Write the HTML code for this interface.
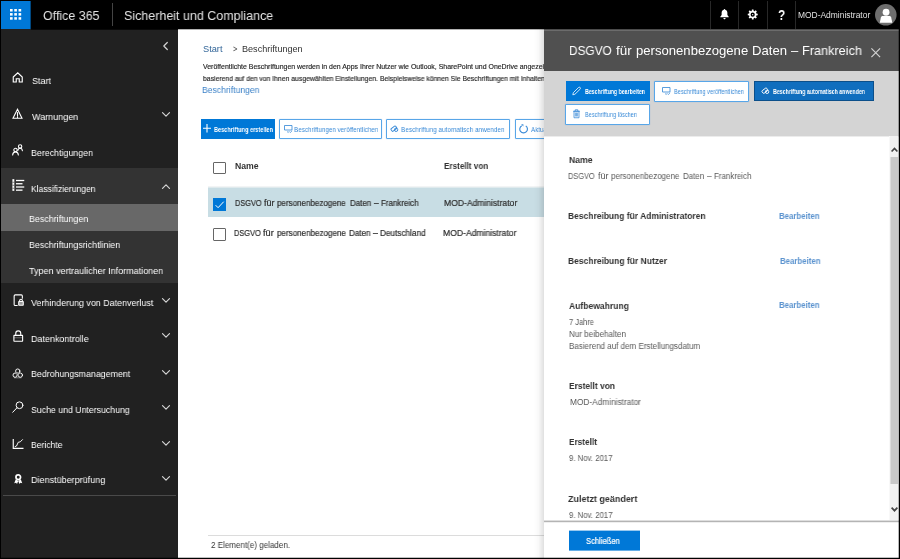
<!DOCTYPE html>
<html lang="de">
<head>
<meta charset="utf-8">
<title>Sicherheit und Compliance – Beschriftungen</title>
<style>
html,body{margin:0;padding:0;}
body{width:900px;height:559px;overflow:hidden;background:#fff;font-family:"Liberation Sans",sans-serif;}
#app{position:relative;width:900px;height:559px;overflow:hidden;background:#fff;}
.a{position:absolute;}
.t{position:absolute;white-space:nowrap;display:block;transform-origin:0 50%;will-change:transform;font-family:"Liberation Sans",sans-serif;}
svg{position:absolute;overflow:visible;}
.ic{fill:none;stroke:#fff;stroke-width:1;stroke-linecap:round;stroke-linejoin:round;}
.cb{position:absolute;width:11px;height:11px;border:1px solid #666;border-radius:1px;background:#fff;}
.btn{position:absolute;box-sizing:border-box;border:1px solid #58a6e8;border-radius:1px;background:#fff;box-shadow:0 0 1px rgba(60,140,216,.55);}
</style>
</head>
<body>
<div id="app">

<!-- ===== top bar ===== -->
<div class="a" id="topbar" style="left:0;top:0;width:900px;height:29px;background:#000;"></div>
<div class="a" style="left:31px;top:29px;width:147px;height:1px;background:rgba(0,0,0,.7);z-index:40;"></div>
<div class="a" style="left:178px;top:29px;width:722px;height:1px;background:rgba(0,0,0,.3);z-index:40;"></div>
<div class="a" id="waffle" style="left:0;top:0;width:30px;height:30px;background:#0078d7;"></div>
<div class="a" style="left:30px;top:0;width:1px;height:30px;background:rgba(0,120,215,.6);"></div>
<svg style="left:10px;top:9.100px" width="11.200" height="10.700" viewBox="0 0 11 11" preserveAspectRatio="none"><g fill="#fff">
<rect x="0" y="0" width="2.6" height="2.6"/><rect x="4.2" y="0" width="2.6" height="2.6"/><rect x="8.4" y="0" width="2.6" height="2.6"/>
<rect x="0" y="4.2" width="2.6" height="2.6"/><rect x="4.2" y="4.2" width="2.6" height="2.6"/><rect x="8.4" y="4.2" width="2.6" height="2.6"/>
<rect x="0" y="8.4" width="2.6" height="2.6"/><rect x="4.2" y="8.4" width="2.6" height="2.6"/><rect x="8.4" y="8.4" width="2.6" height="2.6"/></g></svg>
<div class="a" style="left:111.5px;top:3px;width:1px;height:23px;background:#444;"></div>
<div class="a" style="left:709.600px;top:0;width:1px;height:29px;background:#282828;"></div>
<div class="a" style="left:738px;top:0;width:1px;height:29px;background:#282828;"></div>
<div class="a" style="left:766.5px;top:0;width:1px;height:29px;background:#282828;"></div>
<div class="a" style="left:794.600px;top:0;width:1px;height:29px;background:#282828;"></div>
<!-- bell -->
<svg style="left:720px;top:9.3px" width="9" height="10.4" viewBox="0 0 18 21"><path fill="#fff" d="M9 0c.9 0 1.5.6 1.5 1.4 2.7.7 4.3 3 4.3 6v4.800l2.700 3.300v1H.5v-1l2.700-3.300V7.400c0-3 1.600-5.300 4.300-6C7.500.6 8.100 0 9 0zM6.800 18h4.400c0 1.400-.9 2.500-2.200 2.500S6.800 19.400 6.800 18z"/></svg>
<!-- gear -->
<svg style="left:747.200px;top:9px" width="11.400" height="11.400" viewBox="0 0 24 24"><path fill="#fff" fill-rule="evenodd" d="M10.300 1h3.400l.5 3 .1.030c.55.170 1.080.400 1.600.660l2.450-1.800 2.400 2.400-1.800 2.450c.27.500.5 1.050.66 1.600l3 .5v3.400l-3 .5c-.17.550-.4 1.080-.66 1.600l1.800 2.450-2.400 2.400-2.450-1.800c-.5.270-1.050.5-1.600.66l-.5 3h-3.400l-.5-3c-.55-.170-1.080-.4-1.600-.660l-2.450 1.800-2.400-2.400 1.800-2.450c-.27-.5-.5-1.050-.66-1.600l-3-.5v-3.400l3-.5c.17-.55.4-1.080.66-1.600l-1.800-2.450 2.400-2.400 2.450 1.800c.5-.27 1.050-.5 1.600-.66zM12 7.600a4.400 4.400 0 1 0 0 8.800 4.400 4.400 0 0 0 0-8.800zm0 3a1.400 1.400 0 1 1 0 2.800 1.400 1.400 0 0 1 0-2.800z"/></svg>
<!-- avatar -->
<svg style="left:875px;top:4px" width="21.6" height="21.6" viewBox="0 0 43 43"><defs><clipPath id="avc"><circle cx="21.500" cy="21.500" r="21.500"/></clipPath></defs><circle cx="21.500" cy="21.500" r="21.500" fill="#6e6e6e"/><g clip-path="url(#avc)" fill="#fff"><circle cx="22" cy="16.500" r="6.800"/><path d="M9.500 37.500l2.200-10.500c.5-2 1.800-3 3.800-3h13c2 0 3.300 1 3.800 3l2.200 10.500z"/></g></svg>

<!-- ===== sidebar ===== -->
<div class="a" id="sidebar" style="left:0;top:29px;width:178px;height:530px;background:#212121;"></div>
<div class="a" style="left:0;top:168px;width:178px;height:115px;background:#333;"></div>
<div class="a" style="left:0;top:204px;width:178px;height:26.5px;background:#686868;"></div>
<div class="a" style="left:3px;top:494.600px;width:172.500px;height:1px;background:#4a4a4a;"></div>
<!-- collapse arrow -->
<svg style="left:162.500px;top:42px" width="5" height="8" viewBox="0 0 5 8"><path class="ic" style="stroke:#d4d4d4;stroke-width:1.200" d="M4.300.5L.8 4l3.500 3.500"/></svg>
<!-- chevrons -->
<svg style="left:161.500px;top:112px" width="8" height="5" viewBox="0 0 8 5"><path class="ic" style="stroke:#d4d4d4;stroke-width:1.200" d="M.5.600L4 4.200 7.500.6"/></svg>
<svg style="left:161.500px;top:184.200px" width="8" height="5" viewBox="0 0 8 5"><path class="ic" style="stroke:#d4d4d4;stroke-width:1.200" d="M.5 4.400L4 .8l3.500 3.600"/></svg>
<svg style="left:161.500px;top:297.600px" width="8" height="5" viewBox="0 0 8 5"><path class="ic" style="stroke:#d4d4d4;stroke-width:1.200" d="M.5.600L4 4.200 7.500.6"/></svg>
<svg style="left:161.500px;top:333.400px" width="8" height="5" viewBox="0 0 8 5"><path class="ic" style="stroke:#d4d4d4;stroke-width:1.200" d="M.5.600L4 4.200 7.500.6"/></svg>
<svg style="left:161.500px;top:369.600px" width="8" height="5" viewBox="0 0 8 5"><path class="ic" style="stroke:#d4d4d4;stroke-width:1.200" d="M.5.600L4 4.200 7.500.6"/></svg>
<svg style="left:161.500px;top:404.600px" width="8" height="5" viewBox="0 0 8 5"><path class="ic" style="stroke:#d4d4d4;stroke-width:1.200" d="M.5.600L4 4.200 7.500.6"/></svg>
<svg style="left:161.500px;top:440.800px" width="8" height="5" viewBox="0 0 8 5"><path class="ic" style="stroke:#d4d4d4;stroke-width:1.200" d="M.5.600L4 4.200 7.500.6"/></svg>
<svg style="left:161.500px;top:476px" width="8" height="5" viewBox="0 0 8 5"><path class="ic" style="stroke:#d4d4d4;stroke-width:1.200" d="M.5.600L4 4.200 7.500.6"/></svg>

<!-- home -->
<svg style="left:12px;top:72.300px" width="11.500" height="10.700" viewBox="0 0 23 21.400"><path class="ic" style="stroke-width:2.300;stroke-linejoin:miter" d="M2.500 10L11.500 1.800 20.500 10V20H14.500V13.500H8.500V20H2.500Z"/></svg>
<!-- warning -->
<svg style="left:12px;top:108px" width="11" height="11" viewBox="0 0 22 22"><path class="ic" style="stroke-width:2.200;stroke-linejoin:miter" d="M11 2.500L2 20.500h18zM11 9v6.500M11 17.500v.8"/></svg>
<!-- permissions -->
<svg style="left:12px;top:144px" width="11.500" height="11.500" viewBox="0 0 23 23"><g class="ic" style="stroke-width:2.200"><circle cx="16.200" cy="4.800" r="3.400"/><path d="M11.800 13c.3-2.800 2-4.500 4.400-4.500 2.600 0 4.300 2 4.600 5"/><circle cx="7" cy="12" r="3.400"/><path d="M1.300 22c.3-3.800 2.600-6.200 5.700-6.200s5.400 2.400 5.700 6.200"/></g></svg>
<!-- classification list -->
<svg style="left:11.500px;top:179px" width="12.500" height="12" viewBox="0 0 25 24"><g fill="#fff"><rect x="0.800" y="0.300" width="3.800" height="23.400"/><rect x="8" y="1.700" width="16.500" height="2.600"/><rect x="8" y="8.200" width="13" height="2.600"/><rect x="8" y="14.700" width="16.500" height="2.600"/><rect x="8" y="21" width="13" height="2.600"/></g><g fill="#333"><rect x="0.800" y="5.700" width="3.800" height="1.300"/><rect x="0.800" y="11.700" width="3.800" height="1.300"/><rect x="0.800" y="17.700" width="3.800" height="1.300"/></g></svg>
<!-- DLP: page with lock -->
<svg style="left:12.500px;top:293.600px" width="11" height="12.400" viewBox="0 0 22 24.800"><g class="ic" style="stroke-width:2.200"><path d="M8.500 23H4.500c-1.300 0-2.200-.9-2.200-2.200V4c0-1.300.9-2.200 2.200-2.200h12c1.300 0 2.200.9 2.200 2.200v4.500"/><rect x="11.500" y="15" width="9" height="7.500" rx="0.500" style="fill:#fff;fill-opacity:.55"/><path d="M13.300 15v-1.800c0-1.800 1.100-2.800 2.700-2.800s2.700 1 2.700 2.800V15"/></g></svg>
<!-- lock -->
<svg style="left:12.500px;top:329.500px" width="10.500" height="12" viewBox="0 0 21 24"><g class="ic" style="stroke-width:2.200"><rect x="1.800" y="10.800" width="17.400" height="11.600" rx="0.500"/><path d="M5.500 10.500V7c0-3.200 2-5.300 5-5.300s5 2.100 5 5.300v3.500"/><path d="M2 15.500h17" style="stroke-width:1.400;stroke-opacity:.45"/></g></svg>
<!-- biohazard -->
<svg style="left:12px;top:368px" width="11.500" height="10.500" viewBox="0 0 23 21"><g class="ic" style="stroke-width:1.900"><circle cx="11.500" cy="6.200" r="4.300"/><circle cx="6.300" cy="14.300" r="4.300"/><circle cx="16.700" cy="14.300" r="4.300"/></g><circle cx="11.500" cy="11.600" r="3.300" fill="#212121"/><circle cx="11.500" cy="11.600" r="1.900" fill="none" stroke="#fff" stroke-width="1.500"/><path d="M4 19.600h15" stroke="#fff" stroke-width="1.200" stroke-opacity=".7" fill="none"/></svg>
<!-- search -->
<svg style="left:12px;top:400.500px" width="12" height="12" viewBox="0 0 24 24"><g class="ic" style="stroke-width:2"><circle cx="15" cy="8.500" r="6.800"/><path d="M10 13.500L1.500 22.500"/></g></svg>
<!-- reports -->
<svg style="left:12px;top:438.500px" width="11.500" height="10.500" viewBox="0 0 23 21"><g class="ic" style="stroke-width:2.300;stroke-linecap:butt;stroke-linejoin:miter"><path d="M2.500 0v18.800H23"/><path d="M5.500 15.500l3.500-1.500 3.500-7.500 4-.8 5-5" style="stroke-width:1.900"/></g></svg>
<!-- ribbon -->
<svg style="left:13.500px;top:474px" width="8.500" height="10" viewBox="0 0 17 20"><circle cx="8.500" cy="6.500" r="4.600" fill="none" stroke="#fff" stroke-width="3.400"/><path fill="#fff" d="M3.500 10.500L.5 18.500l3.700-.8 1.800 2.300 2.500-6zM13.500 10.500l3 8-3.700-.8-1.800 2.300-2.500-6z"/></svg>

<!-- ===== main ===== -->
<div class="a" id="main" style="left:178px;top:29px;width:367px;height:530px;background:#fff;"></div>
<!-- toolbar -->
<div class="a" style="left:201px;top:119px;width:74px;height:20px;background:#0078d7;"></div>
<svg style="left:203.300px;top:124.300px" width="8" height="8.400" viewBox="0 0 16 16.800"><path d="M8 0v16.800M0 8.400h16" stroke="#fff" stroke-width="2.200" fill="none"/></svg>
<div class="btn" style="left:279px;top:119px;width:102.500px;height:20.300px;"></div>
<svg style="left:283.700px;top:124.500px" width="8.500" height="7.500" viewBox="0 0 17 15"><g fill="none" stroke="#3c8cd8" stroke-width="1.700" stroke-linejoin="round"><path d="M1 1h15v9H1z"/><path d="M6 13l2.200 1.800 2.300-2M11 13.500l2 1.500 3-3.500" stroke-width="1.500"/></g></svg>
<div class="btn" style="left:386px;top:119px;width:124px;height:20.300px;"></div>
<svg style="left:390px;top:124.800px" width="8.800" height="7.400" viewBox="0 0 17.600 14.800"><g fill="none" stroke="#3c8cd8" stroke-width="2"><rect x="2" y="4.200" width="11.500" height="6.400" rx="1.600" transform="rotate(-37 7.700 7.400)"/><circle cx="12.200" cy="9.600" r="3.400"/></g></svg>
<div class="btn" style="left:515px;top:119px;width:60px;height:20.300px;"></div>
<svg style="left:519.200px;top:124px" width="9.200" height="9.200" viewBox="0 0 18.400 18.400"><g fill="none" stroke="#3c8cd8" stroke-width="2.300"><path d="M5.600 3.400A7.700 7.700 0 1 0 13.500 3.800"/></g><path d="M4.200.4h4.600v4.600z" fill="#3c8cd8"/></svg>

<!-- table -->
<div class="cb" style="left:213px;top:161.500px;height:10.500px;"></div>
<div class="a" style="left:208px;top:186px;width:336px;height:1px;background:#f2f4f5;"></div>
<div class="a" style="left:208px;top:187px;width:336px;height:1px;background:#dfeaed;"></div>
<div class="a" style="left:208px;top:188px;width:336px;height:29px;background:#c8dde4;"></div>
<div class="a" style="left:213px;top:198px;width:13.200px;height:13px;background:#0078d7;"></div>
<svg style="left:213px;top:198px" width="13.200" height="13" viewBox="0 0 13.200 13"><path d="M2.600 7.200l2.500 2.500 5.600-6" fill="none" stroke="#fff" stroke-width="1"/></svg>
<div class="cb" style="left:213px;top:228px;height:10.500px;"></div>
<div class="a" style="left:208px;top:535px;width:336px;height:1px;background:#dcdcdc;"></div>

<span class="t" style="left:42.50px;top:6.00px;line-height:19px;font-size:13.4px;font-weight:400;color:#e4e4e4;transform:scaleX(0.9293)">Office 365</span>
<span class="t" style="left:123.50px;top:6.00px;line-height:19px;font-size:13.4px;font-weight:400;color:#e4e4e4;transform:scaleX(0.9322)">Sicherheit und Compliance</span>
<span class="t" style="left:798.20px;top:8.00px;line-height:14px;font-size:8.4px;font-weight:400;color:#e0e0e0;transform:scaleX(1.0074)">MOD-Administrator</span>
<span class="t" style="left:777.80px;top:5.00px;line-height:20px;font-size:14.4px;font-weight:700;color:#fff;transform:scaleX(0.8185)">?</span>
<span class="t" style="left:31.75px;top:73.00px;line-height:15px;font-size:9.8px;font-weight:400;color:#fff;transform:scaleX(0.9177)">Start</span>
<span class="t" style="left:31.75px;top:109.00px;line-height:15px;font-size:9.8px;font-weight:400;color:#fff;transform:scaleX(0.9195)">Warnungen</span>
<span class="t" style="left:31.25px;top:145.00px;line-height:15px;font-size:9.8px;font-weight:400;color:#fff;transform:scaleX(0.9033)">Berechtigungen</span>
<span class="t" style="left:31.25px;top:181.00px;line-height:15px;font-size:9.8px;font-weight:400;color:#fff;transform:scaleX(0.8709)">Klassifizierungen</span>
<span class="t" style="left:28.50px;top:211.00px;line-height:15px;font-size:9.8px;font-weight:400;color:#fff;transform:scaleX(0.9065)">Beschriftungen</span>
<span class="t" style="left:28.50px;top:237.00px;line-height:15px;font-size:9.8px;font-weight:400;color:#fff;transform:scaleX(0.9057)">Beschriftungsrichtlinien</span>
<span class="t" style="left:28.50px;top:263.00px;line-height:15px;font-size:9.8px;font-weight:400;color:#fff;transform:scaleX(0.9198)">Typen vertraulicher Informationen</span>
<span class="t" style="left:31.25px;top:295.00px;line-height:15px;font-size:9.8px;font-weight:400;color:#fff;transform:scaleX(0.9087)">Verhinderung von Datenverlust</span>
<span class="t" style="left:31.00px;top:331.00px;line-height:15px;font-size:9.8px;font-weight:400;color:#fff;transform:scaleX(0.9139)">Datenkontrolle</span>
<span class="t" style="left:31.25px;top:366.00px;line-height:15px;font-size:9.8px;font-weight:400;color:#fff;transform:scaleX(0.9020)">Bedrohungsmanagement</span>
<span class="t" style="left:31.00px;top:402.00px;line-height:15px;font-size:9.8px;font-weight:400;color:#fff;transform:scaleX(0.8930)">Suche und Untersuchung</span>
<span class="t" style="left:31.25px;top:437.00px;line-height:15px;font-size:9.8px;font-weight:400;color:#fff;transform:scaleX(0.8761)">Berichte</span>
<span class="t" style="left:30.75px;top:472.00px;line-height:15px;font-size:9.8px;font-weight:400;color:#fff;transform:scaleX(0.9211)">Dienstüberprüfung</span>
<span class="t" style="left:202.50px;top:42.00px;line-height:14px;font-size:9.1px;font-weight:400;color:#336699;transform:scaleX(1.0146)">Start</span>
<span class="t" style="left:232.50px;top:41.00px;line-height:15px;font-size:9.5px;font-weight:400;color:#333;transform:scaleX(0.7551)">&gt;</span>
<span class="t" style="left:241.50px;top:42.00px;line-height:14px;font-size:9.1px;font-weight:400;color:#333;transform:scaleX(0.9972)">Beschriftungen</span>
<span class="t" style="left:202.50px;top:61.00px;line-height:11px;font-size:6.9px;font-weight:400;color:#262626;transform:scaleX(1.0076);-webkit-text-stroke:0.15px #262626">Veröffentlichte Beschriftungen werden in den Apps Ihrer Nutzer wie Outlook, SharePoint und OneDrive angezeigt,</span>
<span class="t" style="left:202.50px;top:73.00px;line-height:11px;font-size:6.9px;font-weight:400;color:#262626;transform:scaleX(0.9887);-webkit-text-stroke:0.15px #262626">basierend auf den von Ihnen ausgewählten Einstellungen. Beispielsweise können Sie Beschriftungen mit Inhalten</span>
<span class="t" style="left:202.00px;top:82.00px;line-height:15px;font-size:9.5px;font-weight:400;color:#3c82c8;transform:scaleX(0.9073)">Beschriftungen</span>
<span class="t" style="left:213.50px;top:123.00px;line-height:13px;font-size:8.1px;font-weight:700;color:#fff;transform:scaleX(0.6903)">Beschriftung erstellen</span>
<span class="t" style="left:294.00px;top:123.00px;line-height:13px;font-size:8.1px;font-weight:400;color:#3c8cd8;transform:scaleX(0.7747)">Beschriftungen veröffentlichen</span>
<span class="t" style="left:401.00px;top:123.00px;line-height:13px;font-size:8.1px;font-weight:400;color:#3c8cd8;transform:scaleX(0.7932)">Beschriftung automatisch anwenden</span>
<span class="t" style="left:530.50px;top:123.00px;line-height:13px;font-size:8.1px;font-weight:400;color:#3c8cd8;transform:scaleX(0.7660)">Aktualisieren</span>
<span class="t" style="left:235.20px;top:159.00px;line-height:14px;font-size:8.7px;font-weight:700;color:#333;transform:scaleX(0.9843)">Name</span>
<span class="t" style="left:443.75px;top:159.00px;line-height:14px;font-size:8.7px;font-weight:700;color:#333;transform:scaleX(0.9353)">Erstellt von</span>
<span class="t" style="left:234.50px;top:196.00px;line-height:14px;font-size:8.7px;font-weight:400;color:#2e2e2e;transform:scaleX(0.8506);-webkit-text-stroke:0.2px #2e2e2e">DSGVO</span>
<span class="t" style="left:264.00px;top:196.00px;line-height:14px;font-size:8.7px;font-weight:400;color:#2e2e2e;transform:scaleX(1.0354);-webkit-text-stroke:0.2px #2e2e2e">für</span>
<span class="t" style="left:277.40px;top:196.00px;line-height:14px;font-size:8.7px;font-weight:400;color:#2e2e2e;transform:scaleX(0.9233);-webkit-text-stroke:0.2px #2e2e2e">personenbezogene</span>
<span class="t" style="left:349.60px;top:196.00px;line-height:14px;font-size:8.7px;font-weight:400;color:#2e2e2e;transform:scaleX(0.9186);-webkit-text-stroke:0.2px #2e2e2e">Daten</span>
<span class="t" style="left:373.60px;top:196.00px;line-height:14px;font-size:8.7px;font-weight:400;color:#2e2e2e;transform:scaleX(0.9703);-webkit-text-stroke:0.2px #2e2e2e">–</span>
<span class="t" style="left:380.70px;top:196.00px;line-height:14px;font-size:8.7px;font-weight:400;color:#2e2e2e;transform:scaleX(0.9160);-webkit-text-stroke:0.2px #2e2e2e">Frankreich</span>
<span class="t" style="left:444.25px;top:196.00px;line-height:14px;font-size:8.7px;font-weight:400;color:#2e2e2e;transform:scaleX(0.9853);-webkit-text-stroke:0.2px #2e2e2e">MOD-Administrator</span>
<span class="t" style="left:234.00px;top:226.00px;line-height:14px;font-size:8.7px;font-weight:400;color:#2e2e2e;transform:scaleX(0.8569);-webkit-text-stroke:0.2px #2e2e2e">DSGVO</span>
<span class="t" style="left:263.40px;top:226.00px;line-height:14px;font-size:8.7px;font-weight:400;color:#2e2e2e;transform:scaleX(1.0552);-webkit-text-stroke:0.2px #2e2e2e">für</span>
<span class="t" style="left:276.70px;top:226.00px;line-height:14px;font-size:8.7px;font-weight:400;color:#2e2e2e;transform:scaleX(0.9260);-webkit-text-stroke:0.2px #2e2e2e">personenbezogene</span>
<span class="t" style="left:348.90px;top:226.00px;line-height:14px;font-size:8.7px;font-weight:400;color:#2e2e2e;transform:scaleX(0.9315);-webkit-text-stroke:0.2px #2e2e2e">Daten</span>
<span class="t" style="left:372.90px;top:226.00px;line-height:14px;font-size:8.7px;font-weight:400;color:#2e2e2e;transform:scaleX(1.0116);-webkit-text-stroke:0.2px #2e2e2e">–</span>
<span class="t" style="left:380.00px;top:226.00px;line-height:14px;font-size:8.7px;font-weight:400;color:#2e2e2e;transform:scaleX(0.9442);-webkit-text-stroke:0.2px #2e2e2e">Deutschland</span>
<span class="t" style="left:443.00px;top:226.00px;line-height:14px;font-size:8.7px;font-weight:400;color:#2e2e2e;transform:scaleX(0.9887);-webkit-text-stroke:0.2px #2e2e2e">MOD-Administrator</span>
<span class="t" style="left:210.50px;top:538.00px;line-height:14px;font-size:8.4px;font-weight:400;color:#333;transform:scaleX(0.9587)">2 Element(e) geladen.</span>

<!-- ===== panel ===== -->
<div class="a" style="left:534px;top:29px;width:10px;height:530px;background:linear-gradient(to right,rgba(0,0,0,0),rgba(0,0,0,.025) 45%,rgba(0,0,0,.12));"></div>
<div class="a" id="panel" style="left:544px;top:30px;width:355px;height:529px;background:#fff;"></div>
<div class="a" style="left:544px;top:29px;width:355px;height:42.200px;background:#505050;"></div>
<div class="a" style="left:544px;top:29px;width:355px;height:1.600px;background:#6c6c6c;"></div>
<div class="a" style="left:544px;top:71.200px;width:355px;height:65.200px;background:#d4d4d4;"></div>
<div class="a" style="left:544px;top:136px;width:355px;height:1px;background:#ececec;"></div>
<!-- close X -->
<svg style="left:870.500px;top:48px" width="9.500" height="9.500" viewBox="0 0 9.500 9.500"><path d="M.4.400l8.700 8.700M9.100.4L.4 9.100" stroke="#d0d0d0" stroke-width="1.200" fill="none"/></svg>
<!-- panel buttons -->
<div class="a" style="left:565.500px;top:81px;width:84px;height:20.200px;background:#0078d7;"></div>
<svg style="left:571.700px;top:86px" width="9.600" height="9.600" viewBox="0 0 18 18"><path d="M2.500 12.500L12 3c1-1 2.500-1 3.300-.2s.8 2.300-.2 3.300L5.500 15.500 1.500 16.500z" fill="none" stroke="#fff" stroke-width="1.500" stroke-linejoin="round"/></svg>
<div class="btn" style="left:654px;top:81px;width:94.700px;height:20.600px;"></div>
<svg style="left:661.500px;top:87px" width="8.500" height="7.500" viewBox="0 0 17 15"><g fill="none" stroke="#3c8cd8" stroke-width="1.700" stroke-linejoin="round"><path d="M1 1h15v9H1z"/><path d="M6 13l2.200 1.800 2.300-2M11 13.500l2 1.500 3-3.500" stroke-width="1.500"/></g></svg>
<div class="a" style="left:754px;top:81px;width:120px;height:20.200px;background:#106ebe;box-sizing:border-box;border:1px solid #0b4f8a;"></div>
<svg style="left:761px;top:87.400px" width="8.800" height="7.400" viewBox="0 0 17.600 14.800"><g fill="none" stroke="#fff" stroke-width="1.800"><rect x="2" y="4.200" width="11.500" height="6.400" rx="1.600" transform="rotate(-37 7.700 7.400)"/><circle cx="12.200" cy="9.600" r="3.400"/></g></svg>
<div class="btn" style="left:565.300px;top:104px;width:84.400px;height:20.500px;"></div>
<svg style="left:572.500px;top:109px" width="7" height="9.500" viewBox="0 0 14 19"><g fill="none" stroke="#3c8cd8" stroke-width="1.600"><path d="M2 4.500h10v13H2zM0 4.500h14M4.500 4V1.500h5V4"/><path d="M4.800 7v8M7 7v8M9.200 7v8" stroke-width="1.400"/></g></svg>

<!-- scrollbar -->
<div class="a" style="left:889px;top:136px;width:9.300px;height:385px;background:#f1f1f1;"></div>
<div class="a" style="left:889px;top:136px;width:1px;height:385px;background:#f8f8f8;"></div>
<div class="a" style="left:890px;top:157px;width:8.300px;height:326.500px;background:#c8c8c8;"></div>
<div class="a" style="left:890px;top:157px;width:1px;height:326.500px;background:#dcdcdc;"></div>
<svg style="left:890.900px;top:147px" width="7" height="5.200" viewBox="0 0 7 5.200"><path d="M.6 4.500L3.500 1.500l2.900 3" fill="none" stroke="#454545" stroke-width="1.700"/></svg>
<svg style="left:890.900px;top:507px" width="7" height="5.200" viewBox="0 0 7 5.200"><path d="M.6.700L3.500 3.700 6.400.7" fill="none" stroke="#454545" stroke-width="1.700"/></svg>

<!-- panel footer -->
<div class="a" style="left:544px;top:520.200px;width:355px;height:38px;background:#fff;z-index:20;"></div>
<div class="a" style="left:544px;top:520px;width:355px;height:1px;background:#dedede;z-index:21;"></div>
<div class="a" style="left:544px;top:521px;width:355px;height:1px;background:#b4b4b4;z-index:21;"></div>
<div class="a" style="left:544px;top:522px;width:355px;height:1px;background:#efefef;z-index:21;"></div>
<div class="a" style="left:568.500px;top:531px;width:71px;height:19px;background:#0078d7;z-index:22;"></div>
<div class="a" style="left:568.500px;top:530px;width:71px;height:1px;background:rgba(0,120,215,.4);z-index:22;"></div>
<div class="a" style="left:568.500px;top:550px;width:71px;height:1px;background:rgba(0,120,215,.6);z-index:22;"></div>

<span class="t" style="left:568.90px;top:41.00px;line-height:19px;font-size:13px;font-weight:400;color:#fff;transform:scaleX(0.9091)">DSGVO</span>
<span class="t" style="left:616.00px;top:41.00px;line-height:19px;font-size:13px;font-weight:400;color:#fff;transform:scaleX(1.0348)">für</span>
<span class="t" style="left:635.60px;top:41.00px;line-height:19px;font-size:13px;font-weight:400;color:#fff;transform:scaleX(1.0078)">personenbezogene</span>
<span class="t" style="left:752.30px;top:41.00px;line-height:19px;font-size:13px;font-weight:400;color:#fff;transform:scaleX(1.0086)">Daten</span>
<span class="t" style="left:790.80px;top:41.00px;line-height:19px;font-size:13px;font-weight:400;color:#fff;transform:scaleX(0.9952)">–</span>
<span class="t" style="left:801.70px;top:41.00px;line-height:19px;font-size:13px;font-weight:400;color:#fff;transform:scaleX(0.9752)">Frankreich</span>
<span class="t" style="left:584.50px;top:85.00px;line-height:13px;font-size:7.3px;font-weight:700;color:#fff;transform:scaleX(0.7148)">Beschriftung bearbeiten</span>
<span class="t" style="left:673.50px;top:85.00px;line-height:13px;font-size:7.3px;font-weight:400;color:#3c8cd8;transform:scaleX(0.7785)">Beschriftung veröffentlichen</span>
<span class="t" style="left:773.00px;top:85.00px;line-height:13px;font-size:7.3px;font-weight:700;color:#fff;transform:scaleX(0.7203)">Beschriftung automatisch anwenden</span>
<span class="t" style="left:584.50px;top:108.00px;line-height:13px;font-size:7.3px;font-weight:400;color:#3c8cd8;transform:scaleX(0.7675)">Beschriftung löschen</span>
<span class="t" style="left:568.50px;top:152.00px;line-height:15px;font-size:9.8px;font-weight:700;color:#333;transform:scaleX(0.8806)">Name</span>
<span class="t" style="left:568.10px;top:169.00px;line-height:14px;font-size:8.4px;font-weight:400;color:#585858;transform:scaleX(0.8793)">DSGVO</span>
<span class="t" style="left:597.50px;top:169.00px;line-height:14px;font-size:8.4px;font-weight:400;color:#585858;transform:scaleX(1.0633)">für</span>
<span class="t" style="left:610.80px;top:169.00px;line-height:14px;font-size:8.4px;font-weight:400;color:#585858;transform:scaleX(0.9537)">personenbezogene</span>
<span class="t" style="left:682.70px;top:169.00px;line-height:14px;font-size:8.4px;font-weight:400;color:#585858;transform:scaleX(0.9481)">Daten</span>
<span class="t" style="left:706.60px;top:169.00px;line-height:14px;font-size:8.4px;font-weight:400;color:#585858;transform:scaleX(1.0060)">–</span>
<span class="t" style="left:713.60px;top:169.00px;line-height:14px;font-size:8.4px;font-weight:400;color:#585858;transform:scaleX(0.9453)">Frankreich</span>
<span class="t" style="left:568.00px;top:208.00px;line-height:15px;font-size:9.8px;font-weight:700;color:#333;transform:scaleX(0.8640)">Beschreibung für Administratoren</span>
<span class="t" style="left:779.00px;top:209.00px;line-height:14px;font-size:8.4px;font-weight:700;color:#5b93cf;transform:scaleX(0.9354)">Bearbeiten</span>
<span class="t" style="left:568.00px;top:253.00px;line-height:15px;font-size:9.8px;font-weight:700;color:#333;transform:scaleX(0.8660)">Beschreibung für Nutzer</span>
<span class="t" style="left:779.50px;top:254.00px;line-height:14px;font-size:8.4px;font-weight:700;color:#5b93cf;transform:scaleX(0.9354)">Bearbeiten</span>
<span class="t" style="left:569.00px;top:298.00px;line-height:15px;font-size:9.8px;font-weight:700;color:#333;transform:scaleX(0.8749)">Aufbewahrung</span>
<span class="t" style="left:779.00px;top:298.00px;line-height:14px;font-size:8.4px;font-weight:700;color:#5b93cf;transform:scaleX(0.9354)">Bearbeiten</span>
<span class="t" style="left:569.00px;top:315.00px;line-height:14px;font-size:8.4px;font-weight:400;color:#585858;transform:scaleX(0.8949)">7 Jahre</span>
<span class="t" style="left:569.00px;top:327.00px;line-height:14px;font-size:8.4px;font-weight:400;color:#585858;transform:scaleX(0.9638)">Nur beibehalten</span>
<span class="t" style="left:568.75px;top:339.00px;line-height:14px;font-size:8.4px;font-weight:400;color:#585858;transform:scaleX(0.9556)">Basierend auf dem Erstellungsdatum</span>
<span class="t" style="left:569.00px;top:378.00px;line-height:15px;font-size:9.8px;font-weight:700;color:#333;transform:scaleX(0.8621)">Erstellt von</span>
<span class="t" style="left:569.50px;top:395.00px;line-height:14px;font-size:8.4px;font-weight:400;color:#585858;transform:scaleX(0.9906)">MOD-Administrator</span>
<span class="t" style="left:569.00px;top:434.00px;line-height:15px;font-size:9.8px;font-weight:700;color:#333;transform:scaleX(0.8429)">Erstellt</span>
<span class="t" style="left:569.00px;top:451.00px;line-height:14px;font-size:8.4px;font-weight:400;color:#585858;transform:scaleX(0.9280)">9. Nov. 2017</span>
<span class="t" style="left:568.25px;top:491.00px;line-height:15px;font-size:9.8px;font-weight:700;color:#333;transform:scaleX(0.9151)">Zuletzt geändert</span>
<span class="t" style="left:569.00px;top:508.00px;line-height:14px;font-size:8.4px;font-weight:400;color:#585858;transform:scaleX(0.9280);height:12.00px;overflow:hidden">9. Nov. 2017</span>
<span class="t" style="left:586.25px;top:534.00px;line-height:14px;font-size:9.2px;font-weight:400;color:#fff;transform:scaleX(0.8260);z-index:30;-webkit-text-stroke:0.2px #fff">Schließen</span>

<!-- outer border -->
<div class="a" style="left:0;top:0;width:900px;height:1px;background:#000;z-index:50;"></div>
<div class="a" style="left:0;top:0;width:1px;height:559px;background:#000;z-index:50;"></div>
<div class="a" style="left:898px;top:0;width:1px;height:559px;background:rgba(0,0,0,.28);z-index:50;"></div>
<div class="a" style="left:899px;top:0;width:1px;height:559px;background:#000;z-index:50;"></div>
<div class="a" style="left:0;top:557px;width:900px;height:1px;background:rgba(0,0,0,.25);z-index:50;"></div>
<div class="a" style="left:0;top:558px;width:900px;height:1px;background:#000;z-index:50;"></div>
</div>
</body>
</html>
